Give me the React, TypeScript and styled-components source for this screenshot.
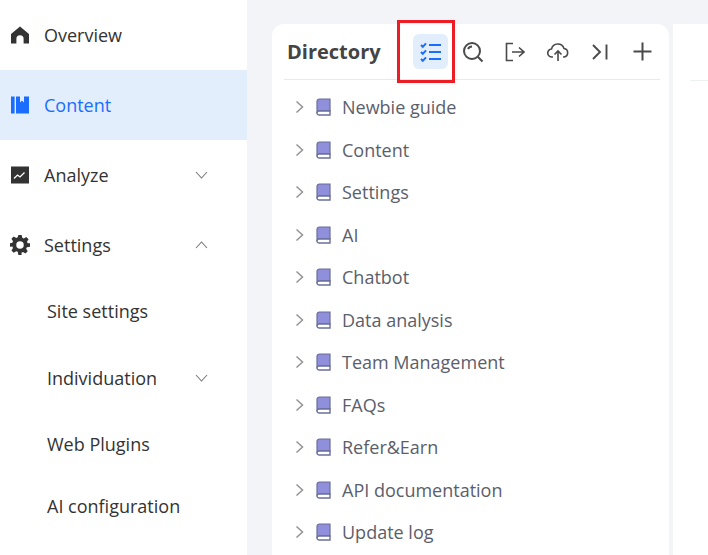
import React from "react";
import styled, { createGlobalStyle } from "styled-components";

const GlobalStyle = createGlobalStyle`
  html, body { margin: 0; padding: 0; height: 100%; overflow: hidden; }
  body { background: #f3f4f8; font-family: "Open Sans", "Noto Sans", "Liberation Sans", sans-serif; }
`;

const Layout = styled.div`
  display: flex;
  width: 708px;
  height: 555px;
  overflow: hidden;
`;

const Sidebar = styled.nav`
  width: 247px;
  flex: none;
  background: #fff;
`;

const NavItem = styled.div<{ $active?: boolean }>`
  display: flex;
  align-items: center;
  height: 70px;
  padding: 0 39px 0 11px;
  box-sizing: border-box;
  background: ${(p) => (p.$active ? "#e3eefd" : "transparent")};
  color: ${(p) => (p.$active ? "#1a6dff" : "#333")};
  font-size: 18px;
`;

const NavIcon = styled.span`
  display: flex;
  width: 33px;
  flex: none;
`;

const NavLabel = styled.span`
  flex: 1;
`;

const SubItem = styled.div<{ $height: number }>`
  display: flex;
  align-items: center;
  height: ${(p) => p.$height}px;
  padding: 0 39px 0 47px;
  color: #333;
  font-size: 18px;
`;

const Main = styled.main`
  display: flex;
  flex: 1;
  gap: 4px;
  padding: 24px 0 0 25px;
  min-width: 0;
`;

const DirectoryCard = styled.section`
  position: relative;
  width: 397px;
  flex: none;
  padding: 0 9px 0 12px;
  box-sizing: border-box;
  background: #fff;
  border-radius: 12px 12px 0 0;
`;

const CardHeader = styled.header`
  display: flex;
  align-items: center;
  height: 55px;
  padding: 0 0 0 3px;
  border-bottom: 1px solid #e8e9ec;
`;

const Title = styled.h2`
  flex: 1;
  margin: 0 0 1px;
  color: #444;
  font-size: 20px;
  font-weight: 700;
`;

const ToolButton = styled.button<{ $active?: boolean }>`
  display: flex;
  align-items: center;
  justify-content: center;
  width: 35px;
  height: 35px;
  margin-left: 7.4px;
  padding: 0;
  border: 0;
  border-radius: 6px;
  background: ${(p) => (p.$active ? "#e3eefd" : "transparent")};
`;

const Highlight = styled.div`
  position: absolute;
  left: 125px;
  top: -4px;
  width: 58px;
  height: 63px;
  box-sizing: border-box;
  border: 3px solid #ee1c25;
`;

const Tree = styled.ul`
  margin: 6px 0 0;
  padding: 0;
  list-style: none;
`;

const TreeRow = styled.li`
  display: flex;
  align-items: center;
  height: 42.5px;
  padding-left: 10px;
  color: #5b5e6b;
  font-size: 18px;
  white-space: nowrap;
`;

const Chevron = styled.svg`
  width: 12px;
  height: 16px;
  flex: none;
  margin-right: 10px;
  fill: none;
  stroke: #939393;
  stroke-width: 1.5;
`;

const BookIcon = styled.svg`
  width: 16px;
  height: 18px;
  flex: none;
  margin-right: 10px;
`;

const DetailPanel = styled.section`
  flex: 1;
  padding: 0 0 0 17px;
  background: #fff;
`;

const DetailLine = styled.div`
  height: 56px;
  border-bottom: 1px solid #eeeff2;
`;

const Caret = ({ up }: { up?: boolean }) => (
  <svg width="13" height="8" viewBox="0 0 13 8" fill="none" stroke="#777" strokeWidth="1.1">
    <path d={up ? "M1 7l5.5-6L12 7" : "M1 1l5.5 6L12 1"} />
  </svg>
);

const tree = [
  "Newbie guide",
  "Content",
  "Settings",
  "AI",
  "Chatbot",
  "Data analysis",
  "Team Management",
  "FAQs",
  "Refer&Earn",
  "API documentation",
  "Update log",
];

const Book = () => (
  <BookIcon viewBox="0 0 16 18">
    <path d="M3.5 1h10.5v12H3.5A2.5 2.5 0 0 0 1 15.2V3.5A2.5 2.5 0 0 1 3.5 1z" fill="#8f8fdc" stroke="#6a6f9a" strokeWidth="1.2" />
    <path d="M1 14.8A2.2 2.2 0 0 1 3.5 13H14v4H3.5A2.3 2.3 0 0 1 1 14.8z" fill="#fff" stroke="#6a6f9a" strokeWidth="1.4" />
  </BookIcon>
);

export default function App() {
  return (
    <Layout>
      <GlobalStyle />
      <Sidebar>
        <NavItem>
          <NavIcon>
            <svg width="18" height="18" viewBox="0 0 18 18" fill="#333">
              <path d="M9 .5 18 8v9.5h-5.4v-4.7a3.6 3.6 0 0 0-7.2 0v4.7H0V8z" />
            </svg>
          </NavIcon>
          <NavLabel>Overview</NavLabel>
        </NavItem>
        <NavItem $active>
          <NavIcon>
            <svg width="18" height="18" viewBox="0 0 18 18" fill="#1a6dff">
              <path d="M0 .5h3.6v17H0zM5 .5h4v6l2-2 2 2v-6H18v17H5z" />
            </svg>
          </NavIcon>
          <NavLabel>Content</NavLabel>
        </NavItem>
        <NavItem>
          <NavIcon>
            <svg width="18" height="18" viewBox="0 0 18 18">
              <rect y=".5" width="18" height="17" fill="#333" />
              <path d="M3 12.5 6.5 9l2.5 2 4.5-4.5" fill="none" stroke="#fff" strokeWidth="1.3" />
            </svg>
          </NavIcon>
          <NavLabel>Analyze</NavLabel>
          <Caret />
        </NavItem>
        <NavItem>
          <NavIcon>
            <svg width="20" height="20" viewBox="0 0 24 24" fill="#333" style={{ marginLeft: -1 }}>
              <path d="M10 0h4l.7 3.4 1.9.8 2.9-1.9 2.8 2.8-1.9 2.9.8 1.9L24 10v4l-3.8.7-.8 1.9 1.9 2.9-2.8 2.8-2.9-1.9-1.9.8L14 24h-4l-.7-3.8-1.9-.8-2.9 1.9-2.8-2.8 1.9-2.9-.8-1.9L0 14v-4l2.8-.7.8-1.9-1.9-2.9 2.8-2.8 2.9 1.9 1.9-.8zM12 7.5a4.5 4.5 0 1 0 0 9 4.5 4.5 0 0 0 0-9z" fillRule="evenodd" />
            </svg>
          </NavIcon>
          <NavLabel>Settings</NavLabel>
          <Caret up />
        </NavItem>
        <SubItem $height={62}>
          <NavLabel>Site settings</NavLabel>
        </SubItem>
        <SubItem $height={71}>
          <NavLabel>Individuation</NavLabel>
          <Caret />
        </SubItem>
        <SubItem $height={61}>
          <NavLabel>Web Plugins</NavLabel>
        </SubItem>
        <SubItem $height={63}>
          <NavLabel>AI configuration</NavLabel>
        </SubItem>
      </Sidebar>
      <Main>
        <DirectoryCard>
          <CardHeader>
            <Title>Directory</Title>
            <ToolButton $active>
              <svg width="22" height="20" viewBox="0 0 22 20" fill="none" stroke="#1a6dff" strokeWidth="2">
                <path d="M1 3l1.8 1.8L6 1.3M1 10l1.8 1.8L6 8.3M1 17l1.8 1.8L6 15.3" />
                <path d="M9 3h12M9 10h12M9 17h12" />
              </svg>
            </ToolButton>
            <ToolButton>
              <svg width="22" height="22" viewBox="0 0 22 22" fill="none" stroke="#4a4a4a" strokeWidth="2">
                <circle cx="10" cy="10" r="8" />
                <path d="M6 8a4.5 4.5 0 0 1 4-2.5M16 16l4.5 4.5" />
              </svg>
            </ToolButton>
            <ToolButton>
              <svg width="20" height="20" viewBox="0 0 20 20" fill="none" stroke="#4a4a4a" strokeWidth="1.6">
                <path d="M8 1.5H1.5v17H8M7 10h12M14 5.5l5 4.5-5 4.5" />
              </svg>
            </ToolButton>
            <ToolButton>
              <svg width="22" height="20" viewBox="0 0 22 20" fill="none" stroke="#4a4a4a" strokeWidth="1.6">
                <path d="M6 15H5a4 4 0 0 1-.5-8A6.5 6.5 0 0 1 17 6.5a4.3 4.3 0 0 1 0 8.5h-1" />
                <path d="M11 19V9M7.5 12.5 11 9l3.5 3.5" />
              </svg>
            </ToolButton>
            <ToolButton>
              <svg width="16" height="16" viewBox="0 0 16 16" fill="none" stroke="#4a4a4a" strokeWidth="1.9">
                <path d="M1 1l7 7-7 7M14.5 .5v15" />
              </svg>
            </ToolButton>
            <ToolButton>
              <svg width="19" height="19" viewBox="0 0 19 19" fill="none" stroke="#4a4a4a" strokeWidth="2">
                <path d="M9.5 .5v18M.5 9.5h18" />
              </svg>
            </ToolButton>
          </CardHeader>
          <Highlight />
          <Tree>
            {tree.map((name) => (
              <TreeRow key={name}>
                <Chevron viewBox="0 0 12 16">
                  <path d="M2.5 2.5 8.5 8l-6 5.5" />
                </Chevron>
                <Book />
                {name}
              </TreeRow>
            ))}
          </Tree>
        </DirectoryCard>
        <DetailPanel>
          <DetailLine />
        </DetailPanel>
      </Main>
    </Layout>
  );
}
